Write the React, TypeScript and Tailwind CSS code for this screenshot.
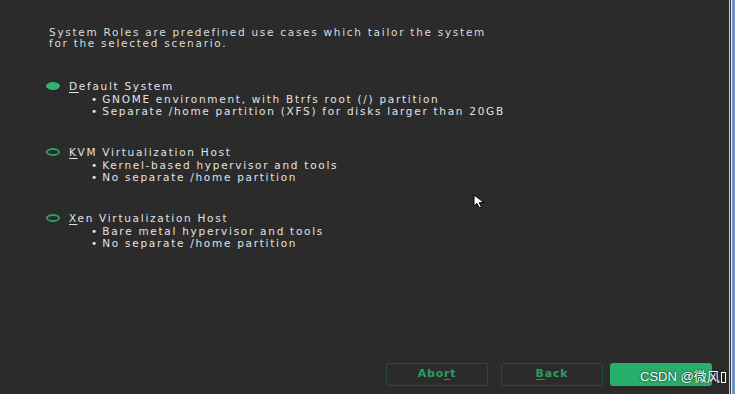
import React from "react";

const roles = [
  {
    key: "D",
    rest: "efault System",
    selected: true,
    bullets: [
      "GNOME environment, with Btrfs root (/) partition",
      "Separate /home partition (XFS) for disks larger than 20GB",
    ],
  },
  {
    key: "K",
    rest: "VM Virtualization Host",
    selected: false,
    bullets: ["Kernel-based hypervisor and tools", "No separate /home partition"],
  },
  {
    key: "X",
    rest: "en Virtualization Host",
    selected: false,
    bullets: ["Bare metal hypervisor and tools", "No separate /home partition"],
  },
];

const font = { fontFamily: '"DejaVu Sans", "Noto Sans CJK SC", sans-serif' };

const Radio = ({ on }: { on: boolean }) =>
  on ? (
    <span className="w-[14px] h-[8px] rounded-[50%] bg-[#2fb36f] shrink-0" />
  ) : (
    <span className="w-[14px] h-[8px] rounded-[50%] border-2 border-[#2a9d63] shrink-0" />
  );

const Cursor = () => (
  <svg width="14" height="15" viewBox="0 0 14 15" className="absolute left-[473px] top-[194px]">
    <path d="M1 1 L1 12 L4 9.5 L6.5 14 L8.5 13 L6.2 8.7 L11 8.5 Z" fill="#fff" stroke="#000" strokeWidth="1" />
  </svg>
);

export default function App() {
  return (
    <div
      className="relative w-[735px] h-[394px] bg-[#2b2b2b] flex overflow-hidden text-[#e2e2e2] text-[10.5px] tracking-[1.72px]"
      style={font}
    >
      <div className="w-[729px] h-full flex flex-col pl-[46px] pt-[26.5px]">
        <p className="pl-[3px] leading-[11.5px] text-[#dcdcdc]">
          System Roles are predefined use cases which tailor the system
          <br />
          for the selected scenario.
        </p>

        <div className="flex flex-col gap-[28.5px] mt-[30px]">
          {roles.map((r) => (
            <div key={r.key} className="flex flex-col">
              <div className="flex items-center gap-[9px] h-[12px] leading-[12px]">
                <Radio on={r.selected} />
                <span>
                  <span className="underline underline-offset-2">{r.key}</span>
                  {r.rest}
                </span>
              </div>
              <ul className="mt-[2.5px] pl-[45px] leading-[11.5px]">
                {r.bullets.map((b) => (
                  <li key={b}>
                    <span className="tracking-normal">•</span> {b}
                  </li>
                ))}
              </ul>
            </div>
          ))}
        </div>

        <div className="mt-auto mb-[8px] flex justify-end pr-[17px] font-bold text-[11px] tracking-[0.8px]">
          <button className="w-[102px] h-[23px] rounded-[3px] border border-[#1d5439] text-[#2a9d63]">
            Abo<span className="underline underline-offset-2">r</span>t
          </button>
          <button className="ml-[13px] w-[102px] h-[23px] rounded-[3px] border border-[#1d5439] text-[#2a9d63]">
            <span className="underline underline-offset-2">B</span>ack
          </button>
          <button className="ml-[7px] w-[102px] h-[23px] rounded-[3px] bg-[#27ae6a]" />
        </div>
      </div>

      <div className="w-px h-full bg-[#c9c9c9]" />
      <div className="w-px h-full bg-[#3a3a3a]" />
      <div className="w-px h-full bg-[#f0f0f0]" />
      <div className="w-[3px] h-full bg-[#6f93c6]" />

      <Cursor />

      <div
        className="absolute left-[640px] top-[369px] flex items-center text-[13px] tracking-normal text-white leading-[16px] [text-shadow:0_0_2px_#000]"
        style={{ fontFamily: '"Liberation Sans", "Noto Sans CJK SC", sans-serif' }}
      >
        CSDN @微风
        <span className="ml-[1px] w-[5px] h-[11px] border border-white bg-[#222]" />
      </div>
    </div>
  );
}
